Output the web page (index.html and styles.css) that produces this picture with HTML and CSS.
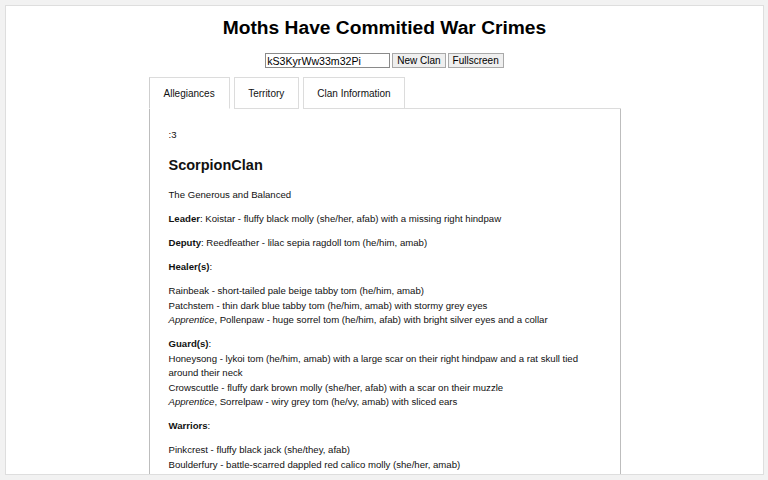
FILE: index.html
```html
<!DOCTYPE html>
<html>
<head>
<meta charset="utf-8">
<link rel="stylesheet" href="styles.css">
</head>
<body>
<div class="viewport">
  <h1 class="title">Moths Have Commitied War Crimes</h1>
  <div class="controls">
    <input class="seed" type="text" value="kS3KyrWw33m32Pi">
    <button class="btn">New Clan</button>
    <button class="btn">Fullscreen</button>
  </div>
  <div class="tabs-wrap">
    <div class="tabs">
      <div class="tab active">Allegiances</div>
      <div class="tab">Territory</div>
      <div class="tab">Clan Information</div>
      <div class="tab-fill"></div>
    </div>
    <div class="panel">
      <p>:3</p>
      <h2 class="clan">ScorpionClan</h2>
      <p>The Generous and Balanced</p>
      <p><b>Leader</b>: Koistar - fluffy black molly (she/her, afab) with a missing right hindpaw</p>
      <p><b>Deputy</b>: Reedfeather - lilac sepia ragdoll tom (he/him, amab)</p>
      <p><b>Healer(s)</b>:</p>
      <p>Rainbeak - short-tailed pale beige tabby tom (he/him, amab)<br>
      Patchstem - thin dark blue tabby tom (he/him, amab) with stormy grey eyes<br>
      <i>Apprentice</i>, Pollenpaw - huge sorrel tom (he/him, afab) with bright silver eyes and a collar</p>
      <p><b>Guard(s)</b>:<br>
      Honeysong - lykoi tom (he/him, amab) with a large scar on their right hindpaw and a rat skull tied around their neck<br>
      Crowscuttle - fluffy dark brown molly (she/her, afab) with a scar on their muzzle<br>
      <i>Apprentice</i>, Sorrelpaw - wiry grey tom (he/vy, amab) with sliced ears</p>
      <p><b>Warriors</b>:</p>
      <p>Pinkcrest - fluffy black jack (she/they, afab)<br>
      Boulderfury - battle-scarred dappled red calico molly (she/her, amab)<br>
      Emberleaf - fluffy sorrel tabby molly (she/her, afab) with green eyes</p>
    </div>
  </div>
</div>
</body>
</html>
```
FILE: styles.css
```css
html, body {
  margin: 0;
  padding: 0;
}
body {
  background: #f2f2f2;
  font-family: "Liberation Sans", Arial, sans-serif;
  color: #111;
}
.viewport {
  margin: 5px 4px 0 5px;
  height: 468px;
  background: #fff;
  border: 1px solid #dedede;
  overflow: hidden;
}
.title {
  margin: 10px 0 0 0;
  text-align: center;
  font-size: 19.2px;
  line-height: 24px;
  font-weight: bold;
  color: #000;
}
.controls {
  display: flex;
  justify-content: center;
  gap: 2px;
  margin-top: 13px;
}
.seed {
  width: 125px;
  height: 15px;
  box-sizing: border-box;
  font-family: inherit;
  font-size: 10.6px;
  padding: 0 1px;
  border: 1px solid #8a8a8a;
  color: #000;
  margin: 0;
}
.btn {
  height: 15px;
  box-sizing: border-box;
  font-family: inherit;
  font-size: 10px;
  padding: 0 4px;
  margin: 0;
  background: #efefef;
  border: 1px solid #a9a9a9;
  color: #000;
}
.tabs-wrap {
  width: 472px;
  margin: 9px auto 0 auto;
}
.tabs {
  display: flex;
  align-items: flex-end;
  gap: 4px;
}
.tab {
  height: 32px;
  box-sizing: border-box;
  border: 1px solid #dcdcdc;
  padding: 0 13.5px;
  font-size: 10px;
  display: flex;
  align-items: center;
  color: #111;
}
.tab.active {
  padding: 0 14px;
  border-bottom-color: #fff;
  border-left-color: #cfcfcf;
}
.tab-fill {
  flex: 1;
  border-bottom: 1px solid #dcdcdc;
  margin-left: -4px;
}
.panel {
  border-left: 1px solid #bdbdbd;
  border-right: 1px solid #bdbdbd;
  padding: 19px 19px 20px 19px;
  font-size: 9.6px;
  line-height: 14.5px;
}
.panel p {
  margin: 0 0 9.5px 0;
}
.clan {
  font-size: 14.5px;
  line-height: 18px;
  margin: 13.75px 0 13.75px 0;
}
```
